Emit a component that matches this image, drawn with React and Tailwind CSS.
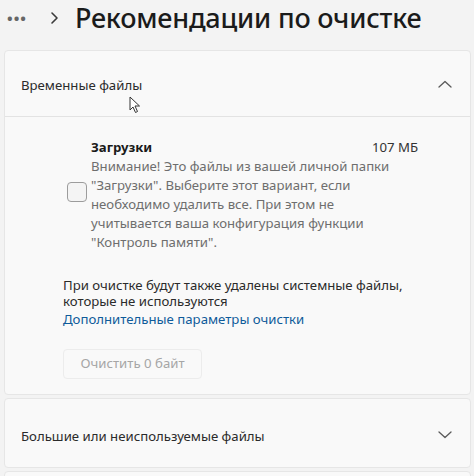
import React from "react";

const font = { fontFamily: '"Noto Sans", "Open Sans", sans-serif' };

function ChevronUp() {
  return (
    <svg width="14" height="8" viewBox="0 0 14 8" fill="none">
      <path d="M1 7 L7 1.5 L13 7" stroke="#5a5a5a" strokeWidth="1.3" strokeLinecap="round" strokeLinejoin="round" />
    </svg>
  );
}
function ChevronDown() {
  return (
    <svg width="14" height="8" viewBox="0 0 14 8" fill="none">
      <path d="M1 1 L7 6.5 L13 1" stroke="#5a5a5a" strokeWidth="1.3" strokeLinecap="round" strokeLinejoin="round" />
    </svg>
  );
}

export default function App() {
  return (
    <div className="relative w-[474px] h-[476px] overflow-hidden bg-[#f3f3f3]" style={font}>
      {/* Header */}
      <div className="flex items-center h-[50px] pl-[7px] pb-[14px]">
        <span className="text-[15px] tracking-[1px] font-bold leading-none text-[#666]">•••</span>
        <span className="ml-[23px]">
          <svg width="9" height="14" viewBox="0 0 9 14" fill="none">
            <path d="M2 2 L7 7 L2 12" stroke="#3a3a3a" strokeWidth="1.6" strokeLinecap="round" strokeLinejoin="round" />
          </svg>
        </span>
        <h1 className="ml-[16px] text-[27px] font-medium text-[#1b1b1b] leading-[34px] tracking-[-0.2px]">
          Рекомендации по очистке
        </h1>
      </div>

      {/* Card 1 */}
      <div className="ml-[4px] mr-[3px] bg-[#f9f9f9] border border-[#e6e6e6] rounded-[4px]">
        <div className="flex items-center justify-between h-[66px] pl-[16px] pr-[18px] border-b border-[#e3e3e3]">
          <span className="text-[13.2px] text-[#2b2b2b] mt-[4px]">Временные файлы</span>
          <ChevronUp />
        </div>
        <div className="pt-[21px] pb-[15px] pl-[58px] pr-[52px]">
          <div className="flex items-start">
            <div className="mt-[44px] w-[20px] h-[20px] shrink-0 rounded-[4px] border border-[#9c9c9c] bg-[#f4f4f4] ml-[4px]" />
            <div className="ml-[4px] flex-1">
              <div className="flex justify-between items-baseline">
                <span className="text-[13.2px] font-bold text-[#1a1a1a] leading-[19px]">Загрузки</span>
                <span className="text-[13.2px] text-[#333] leading-[19px]">107 МБ</span>
              </div>
              <p className="text-[13.2px] text-[#6e6e6e] leading-[19px] pr-[20px]">
                Внимание! Это файлы из вашей личной папки "Загрузки". Выберите этот вариант, если необходимо удалить все. При этом не учитывается ваша конфигурация функции "Контроль памяти".
              </p>
            </div>
          </div>
          <p className="mt-[25px] text-[13.2px] text-[#2b2b2b] leading-[16px]">
            При очистке будут также удалены системные файлы, которые не используются
          </p>
          <a className="block mt-[1px] text-[13.2px] text-[#0f5b9a] leading-[18px]">Дополнительные параметры очистки</a>
          <button className="mt-[21px] w-[139px] h-[30px] rounded-[4px] border border-[#ececec] bg-[#f9f9f9] text-[13.2px] text-[#a6a6a6]">
            Очистить 0 байт
          </button>
        </div>
      </div>

      {/* Card 2 */}
      <div className="mt-[3px] ml-[4px] mr-[3px] bg-[#f9f9f9] border border-[#e6e6e6] rounded-[4px]">
        <div className="flex items-center justify-between h-[68px] pl-[16px] pr-[18px]">
          <span className="text-[13.2px] text-[#2b2b2b] mt-[8px]">Большие или неиспользуемые файлы</span>
          <span className="mt-[4px]"><ChevronDown /></span>
        </div>
      </div>

      {/* Card 3 */}
      <div className="mt-[3px] ml-[4px] mr-[3px] h-[40px] bg-[#f9f9f9] border border-[#e6e6e6] rounded-[4px]" />

      {/* Mouse cursor overlay */}
      <svg className="absolute left-[129px] top-[96px]" width="12" height="18" viewBox="0 0 12 18">
        <path d="M1 1 L1 14 L4 11 L6.5 16.5 L8.5 15.5 L6 10 L10.5 10 Z" fill="#ffffff" stroke="#333" strokeWidth="1" strokeLinejoin="round" />
      </svg>
    </div>
  );
}
